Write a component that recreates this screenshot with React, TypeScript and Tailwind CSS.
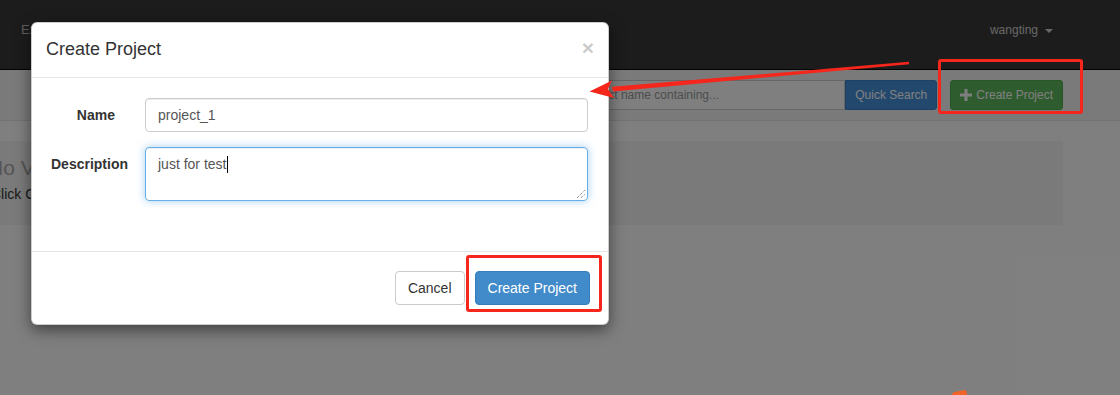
import React from "react";

const PlusIcon = () => (
  <svg width="12" height="12" viewBox="0 0 12 12" className="mr-[4px]">
    <rect x="4.5" y="0" width="3" height="12" fill="currentColor" />
    <rect x="0" y="4.5" width="12" height="3" fill="currentColor" />
  </svg>
);

const Arrow = () => (
  <svg className="pointer-events-none absolute inset-0" width="1120" height="395">
    {/* tapered shaft */}
    <polygon points="909,61.8 909,64.2 613,91.6 612,86.8" fill="#f5261c" />
    {/* head */}
    <polygon points="589.5,91.5 612,80.5 608,89 614,98" fill="#f5261c" />
  </svg>
);

export default function App() {
  return (
    <div className="relative h-[395px] w-[1120px] overflow-hidden bg-white font-['Liberation_Sans',Arial,sans-serif]">
      {/* page behind the modal */}
      <nav className="flex h-[70px] items-start justify-between border-b border-[#080808] bg-[#393939] pl-[21px] pr-[67px] pt-[20px]">
        <span className="text-[13px] leading-[20px] text-[#bbbbbb]">Executing</span>
        <span className="flex items-center text-[12px] leading-[20px] text-[#d0d0d0]">
          wangting
          <span className="ml-[7px] mt-[2px] h-0 w-0 border-x-[4px] border-t-[4px] border-x-transparent border-t-[#d0d0d0]" />
        </span>
      </nav>

      <div className="flex h-[51px] justify-end border-b border-[#e4e4e4] bg-[#f5f5f5] pr-[57px] pt-[10px]">
        <div className="flex h-[30px]">
          <div className="flex w-[276px] items-center rounded-l-[3px] border border-[#cccccc] bg-white pl-[10px] text-[12px] text-[#999999]">
            Project name containing...
          </div>
          <button className="h-[30px] rounded-r-[3px] border border-[#3a80c6] bg-[#4591dc] px-[9px] text-[12px] text-white">
            Quick Search
          </button>
        </div>
        <button className="ml-[13px] flex h-[30px] items-center rounded-[3px] border border-[#4cae4c] bg-[#5cb85c] px-[9px] text-[12px] text-white">
          <PlusIcon />
          Create Project
        </button>
      </div>

      <div className="-ml-[73px] mr-[57px] mt-[20px] h-[84px] bg-[#f4f4f4] pl-[61px] pt-[15px]">
        <h2 className="text-[21px] leading-[24px] text-[#aaaaaa]">No Visible Projects</h2>
        <p className="mt-[4px] pl-[3px] text-[14px] leading-[20px] text-[#333333]">Click Create Project to start a new project.</p>
      </div>

      {/* backdrop */}
      <div className="absolute inset-0 bg-black/50" />

      {/* modal */}
      <div className="absolute left-[31px] top-[22px] w-[578px] rounded-[6px] border border-black/20 bg-white shadow-[0_5px_15px_rgba(0,0,0,0.5)]">
        <div className="flex h-[55px] items-center justify-between border-b border-[#e5e5e5] pl-[14px] pr-[14px]">
          <h4 className="-mt-[1px] text-[18px] text-[#333333]">Create Project</h4>
          <span className="-mt-[5px] text-[21px] font-bold leading-none text-black opacity-20">×</span>
        </div>

        <div className="pb-[50px] pt-[20px]">
          <div className="flex items-center">
            <label className="w-[98px] pr-[15px] text-right text-[14px] font-bold text-[#333333]">Name</label>
            <div className="ml-[15px] flex h-[34px] w-[443px] items-center rounded-[4px] border border-[#cccccc] px-[12px] text-[14px] text-[#555555] shadow-[inset_0_1px_1px_rgba(0,0,0,0.075)]">
              project_1
            </div>
          </div>
          <div className="mt-[15px] flex items-start">
            <label className="w-[98px] pr-[2px] pt-[7px] text-right text-[14px] font-bold leading-[20px] text-[#333333]">
              Description
            </label>
            <div className="relative ml-[15px] h-[54px] w-[443px] rounded-[4px] border border-[#66afe9] px-[12px] py-[6px] text-[14px] leading-[20px] text-[#555555] shadow-[inset_0_1px_1px_rgba(0,0,0,0.075),0_0_8px_rgba(102,175,233,0.6)]">
              <span className="flex items-center">
                just for test
                <span className="ml-[1px] inline-block h-[17px] w-px bg-black" />
              </span>
              <svg className="absolute bottom-[2px] right-[2px]" width="9" height="9" viewBox="0 0 9 9">
                <line x1="1" y1="9" x2="9" y2="1" stroke="#666" strokeWidth="1" strokeDasharray="1 1" />
                <line x1="5" y1="9" x2="9" y2="5" stroke="#666" strokeWidth="1" strokeDasharray="1 1" />
              </svg>
            </div>
          </div>
        </div>

        <div className="flex justify-end gap-[10px] border-t border-[#e5e5e5] pb-[19px] pr-[18px] pt-[19px]">
          <button className="h-[34px] rounded-[4px] border border-[#cccccc] bg-white px-[12px] text-[14px] text-[#333333]">
            Cancel
          </button>
          <button className="h-[34px] rounded-[4px] border border-[#357ebd] bg-[#428bca] px-[12px] text-[14px] text-white">
            Create Project
          </button>
        </div>
      </div>

      {/* annotations */}
      <div className="absolute left-[938px] top-[59px] h-[55px] w-[145px] rounded-[3px] border-[3px] border-[#f5261c]" />
      <div className="absolute left-[466px] top-[255px] h-[57px] w-[136px] rounded-[3px] border-[3px] border-[#f5261c]" />
      <Arrow />
      <div className="absolute left-[952px] top-[391px] h-[6px] w-[15px] -rotate-12 rounded-full bg-[#f0642a]" />
    </div>
  );
}
